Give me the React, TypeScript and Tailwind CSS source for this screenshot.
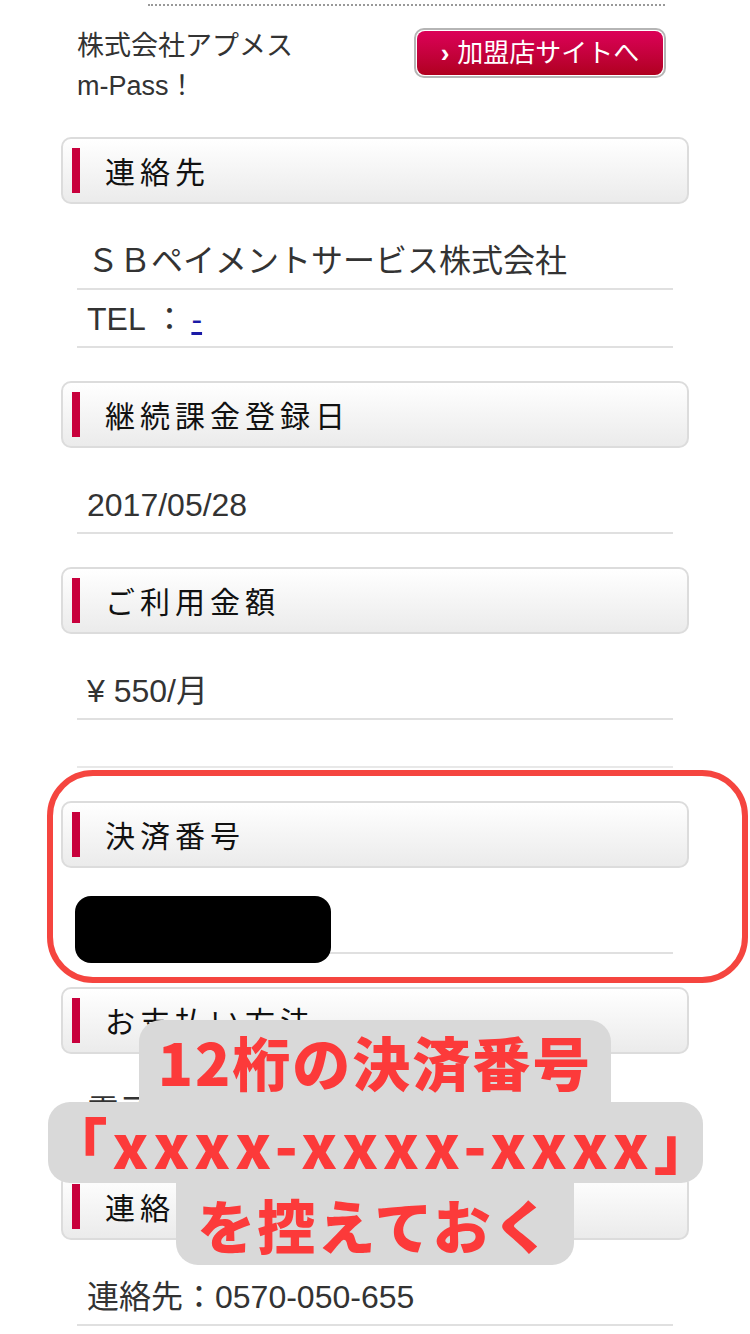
import React from "react";

const SANS = "font-['Liberation_Sans','Noto_Sans_CJK_JP',sans-serif]";

function SectionHeader({ title }: { title: string }) {
  return (
    <div className="flex h-[67px] items-center rounded-[10px] border-2 border-[#dcdcdc] bg-gradient-to-b from-white to-[#ebebeb] pl-[9px]">
      <div className="h-[45px] w-[8px] bg-[#c8003c]" />
      <span className="ml-[25px] font-['Noto_Sans_CJK_JP',sans-serif] text-[30px] tracking-[5px] text-[#111]">
        {title}
      </span>
    </div>
  );
}

function Row({ children }: { children: React.ReactNode }) {
  return (
    <div className="mx-[16px] flex h-[58px] items-center border-b-2 border-[#e0e0e0] pl-[10px] pt-[2px] text-[32px] text-[#333]">
      {children}
    </div>
  );
}

export default function App() {
  return (
    <div className={`relative min-h-[1334px] w-[750px] overflow-hidden bg-white ${SANS}`}>
      {/* top dotted rule */}
      <div className="ml-[148px] mr-[85px] border-b-2 border-dotted border-[#999] pt-[4px]" />

      {/* merchant block */}
      <div className="mt-[20px] flex justify-between pl-[77px] pr-[84px]">
        <div className="text-[27px] leading-[40px] text-[#333]">
          <div>株式会社アプメス</div>
          <div>m-Pass！</div>
        </div>
        <a className="mt-[2px] flex h-[50px] w-[252px] items-center rounded-[10px] border-2 border-[#b5b5b5] bg-white p-[1px]">
          <span className="flex h-full w-full items-center justify-center rounded-[8px] bg-gradient-to-b from-[#dc0058] to-[#b0001f] text-[26px] text-white">
            <span className="mr-[8px] text-[26px] font-bold">›</span>
            加盟店サイトへ
          </span>
        </a>
      </div>

      <div className="mx-[61px] mt-[31px]">
        <SectionHeader title="連絡先" />
        <div className="mt-[28px]">
          <Row>ＳＢペイメントサービス株式会社</Row>
          <Row>
            TEL ：<a className="ml-[6px] text-[#1a1aa6] underline">-</a>
          </Row>
        </div>

        <div className="mt-[33px]">
          <SectionHeader title="継続課金登録日" />
          <div className="mt-[28px]">
            <Row>2017/05/28</Row>
          </div>
        </div>

        <div className="mt-[33px]">
          <SectionHeader title="ご利用金額" />
          <div className="mt-[28px]">
            <Row>¥ 550/月</Row>
          </div>
          <div className="mx-[16px] h-[48px] border-b-2 border-[#e8e8e8]" />
        </div>

        <div className="mt-[33px]">
          <SectionHeader title="決済番号" />
          <div className="mt-[28px]">
            <div className="mx-[16px] h-[58px] border-b-2 border-[#e0e0e0]">
              <div className="relative -ml-[2px] h-[67px] w-[256px] rounded-[16px] bg-black" />
            </div>
          </div>
        </div>

        <div className="mt-[33px]">
          <SectionHeader title="お支払い方法" />
          <div className="mt-[28px]">
            <Row>電子マネー</Row>
          </div>
        </div>

        <div className="mt-[33px]">
          <SectionHeader title="連絡先" />
          <div className="mt-[28px]">
            <Row>連絡先：0570-050-655</Row>
          </div>
        </div>
      </div>

      {/* highlight frame */}
      <div className="absolute left-[47px] top-[770px] h-[213px] w-[701px] rounded-[46px] border-[6px] border-[#f5453f]" />

      {/* caption */}
      <div className="absolute left-0 right-0 top-[1020px] flex flex-col items-center font-['Noto_Sans_CJK_JP',sans-serif] font-black text-[#fc3a3a]">
        <div className="flex h-[82px] w-[472px] items-center justify-center rounded-t-[22px] bg-[#d9d9d9] text-[58px] tracking-[2px]">
          12桁の決済番号
        </div>
        <div className="flex h-[81px] w-[655px] items-center justify-center rounded-[22px] bg-[#d9d9d9] text-[60px] tracking-[5px]">
          「xxxx-xxxx-xxxx」
        </div>
        <div className="flex h-[82px] w-[398px] items-center justify-center rounded-b-[22px] bg-[#d9d9d9] text-[58px] tracking-[2px]">
          を控えておく
        </div>
      </div>
    </div>
  );
}
